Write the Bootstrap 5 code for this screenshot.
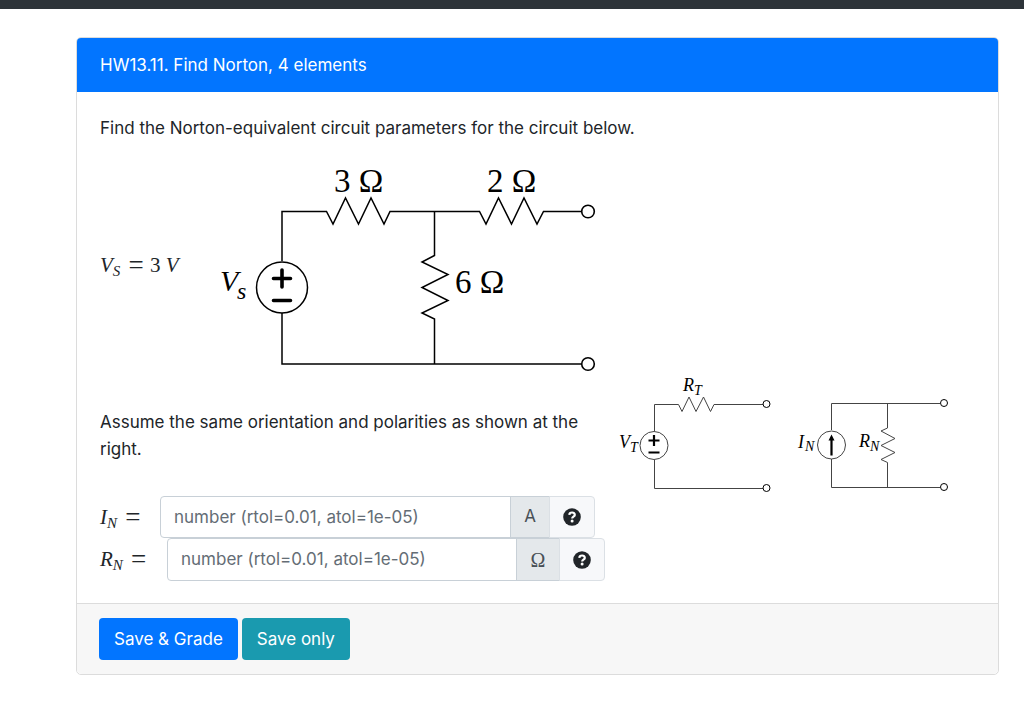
<!DOCTYPE html>
<html lang="en">
<head>
<meta charset="utf-8">
<meta name="viewport" content="width=device-width, initial-scale=1">
<title>HW13.11. Find Norton, 4 elements</title>
<link href="https://cdn.jsdelivr.net/npm/bootstrap@5.3.0/dist/css/bootstrap.min.css" rel="stylesheet">
<style>
  body { font-family: Inter, "Liberation Sans", sans-serif; font-size: 17px; line-height: 27px; color: #212529; }
  .topbar { height: 9px; background: #2e3439; }
  .page { padding: 28px 25px 28px 76px; }
  .question { border-color: #dcdcdc; border-radius: 5px; }
  .question > .card-header { background: #0275ff; padding: 14px 23px 13px; border: 0; border-radius: 4px 4px 0 0; }
  .question > .card-body { padding: 23px 23px 22px; }
  .question > .card-footer { background: #f7f7f7; padding: 14px 22px; border-color: #dcdcdc; }
  .eq { font-family: "Liberation Serif", serif; font-size: 21px; white-space: nowrap; }
  .eq sub { font-size: 15px; bottom: -4px; }
  .equals { font-size: 27px; line-height: 1; vertical-align: -2px; margin: 0 1px 0 3px; }
  .given { width: 115px; }
  .assume { width: 495px; }
  .models { margin-left: 22px; }
  .drawing text { font-family: "Liberation Serif", serif; fill: #000; }
  .drawing .wire { fill: none; stroke: #000; }
  .drawing .port { fill: #fff; stroke: #000; }
  .models .fine { stroke: #444; }
  .label-in { width: 60px; }
  .label-rn { width: 67px; }
  .answer { width: 435px; }
  .answer-wide { width: 438px; }
  .answer .form-control, .answer-wide .form-control { font-size: 17px; line-height: 28px; padding: 6px 13px; border-color: #c8d0d7; border-radius: 4px; color: #495057; }
  .answer-wide .form-control { padding-bottom: 7px; }
  .form-control::placeholder { color: #646d75; }
  .input-group-text { width: 40px; padding: 0; justify-content: center; font-size: 17px; background: #e4e8eb; border-color: #c8d0d7; color: #495057; }
  .answer-wide .input-group-text { width: 44px; font-size: 20px; }
  .help { width: 46px; padding: 0; background: #f7f8fa; border: 1px solid #dbe0e5; border-radius: 4px; color: #212529; display: flex; align-items: center; justify-content: center; }
  .save { font-size: 17px; line-height: 28px; padding: 7px 15px; border: 0; border-radius: 4px; color: #fff; }
  .save-grade { background: #0275ff; }
  .save-only { background: #1a9aaf; }
</style>
</head>
<body>
<div class="topbar"></div>
<main class="page">
  <form class="card question">
    <div class="card-header text-white">HW13.11. Find Norton, 4 elements</div>
    <div class="card-body">
      <p class="mb-3">Find the Norton-equivalent circuit parameters for the circuit below.</p>
      <div class="d-flex align-items-center">
        <div class="given eq"><i>V<sub>S</sub></i> <span class="equals">=</span> 3 <i>V</i></div>
        <svg class="drawing" width="390" height="214" viewBox="215 158 390 214" role="img" aria-label="Source circuit">
          <path class="wire" stroke-width="1.500" d="M282 261V211.500H326.500L333 224L345.500 198L358.500 224L371 198L384 224L390 211.500H479.500L486 224L498.500 198L511.500 224L524 198L537 224L543.500 211.500H581M282 313V364H581M434.500 211.500V255.500L422 262L448 274.500L422 287.500L448 300.500L422 313L434.500 319V364"/>
          <circle class="port" stroke-width="1.600" cx="588" cy="211.500" r="6.300"/>
          <circle class="port" stroke-width="1.600" cx="588" cy="364" r="6.300"/>
          <circle class="port" stroke-width="1.500" cx="282" cy="287.500" r="25.500"/>
          <path class="wire" stroke-width="3.600" stroke-linecap="round" d="M273.500 278.500H290.500M282 270V287M273.500 300.500H290.500"/>
          <text x="334" y="192" font-size="33">3 Ω</text>
          <text x="487" y="192" font-size="33">2 Ω</text>
          <text x="455" y="293" font-size="33">6 Ω</text>
          <text x="220" y="291" font-size="30" font-style="italic">V</text>
          <text x="237" y="299" font-size="24" font-style="italic">s</text>
        </svg>
      </div>
      <div class="d-flex align-items-center mt-1">
        <p class="assume mb-0">Assume the same orientation and polarities as shown at the right.</p>
        <svg class="drawing models flex-shrink-0" width="340" height="120" viewBox="617 376 340 120" role="img" aria-label="Thevenin and Norton equivalent circuits">
          <path class="wire fine" stroke-width="1" d="M654.500 431V404.500H678.500L682 411.500L689 397L696 411.500L703.500 397L710.500 411.500L714 404.500H763M654.500 460V488.500H763M831.500 430V403.500H940M831.500 459V487.500H940M887.500 403.500V428L881 431L895 438.500L881 445.500L895 452.500L881 459.500L887.500 462.500V487.500"/>
          <circle class="port" cx="766.500" cy="404" r="3.500"/>
          <circle class="port" cx="766.500" cy="488" r="3.500"/>
          <circle class="port" cx="944" cy="403" r="3.500"/>
          <circle class="port" cx="944" cy="487" r="3.500"/>
          <circle class="port fine" cx="654" cy="445.500" r="14"/>
          <circle class="port fine" cx="831.500" cy="445" r="14"/>
          <path class="wire" stroke-width="2.200" d="M648.500 440.500H659.500M654 435V446M648.500 452.500H659.500M831.500 455.500V438"/>
          <path d="M831.500 434.500L828.500 440.500H834.500Z"/>
          <g font-style="italic" font-size="18">
            <text x="683" y="391">R</text><text x="619" y="448">V</text><text x="798" y="448">I</text><text x="859" y="447">R</text>
            <g font-size="14"><text x="694" y="395">T</text><text x="630" y="452">T</text><text x="805" y="451">N</text><text x="870" y="451">N</text></g>
          </g>
        </svg>
      </div>
      <div class="d-flex align-items-center">
        <label class="eq label-in" for="in"><i>I<sub>N</sub></i> <span class="equals">=</span></label>
        <div class="input-group answer flex-nowrap">
          <input class="form-control" id="in" type="text" placeholder="number (rtol=0.01, atol=1e-05)">
          <span class="input-group-text">A</span>
          <button class="help" type="button" aria-label="Help"><svg width="18" height="18" viewBox="0 0 18 18"><circle cx="9" cy="9" r="8.800" fill="#212529"/><path d="M6.300 6.800C6.600 3.700 11.900 3.800 11.800 6.900C11.700 8.700 9.200 8.700 9.200 10.400" fill="none" stroke="#fff" stroke-width="2.200"/><circle cx="9.100" cy="13" r="1.500" fill="#fff"/></svg></button>
        </div>
      </div>
      <div class="d-flex align-items-center">
        <label class="eq label-rn" for="rn"><i>R<sub>N</sub></i> <span class="equals">=</span></label>
        <div class="input-group answer-wide flex-nowrap">
          <input class="form-control" id="rn" type="text" placeholder="number (rtol=0.01, atol=1e-05)">
          <span class="input-group-text eq">Ω</span>
          <button class="help" type="button" aria-label="Help"><svg width="18" height="18" viewBox="0 0 18 18"><circle cx="9" cy="9" r="8.800" fill="#212529"/><path d="M6.300 6.800C6.600 3.700 11.900 3.800 11.800 6.900C11.700 8.700 9.200 8.700 9.200 10.400" fill="none" stroke="#fff" stroke-width="2.200"/><circle cx="9.100" cy="13" r="1.500" fill="#fff"/></svg></button>
        </div>
      </div>
    </div>
    <div class="card-footer d-flex gap-1">
      <button class="btn save save-grade" type="submit">Save &amp; Grade</button>
      <button class="btn save save-only" type="submit">Save only</button>
    </div>
  </form>
</main>
<script src="https://cdn.jsdelivr.net/npm/bootstrap@5.3.0/dist/js/bootstrap.bundle.min.js"></script>
</body>
</html>
